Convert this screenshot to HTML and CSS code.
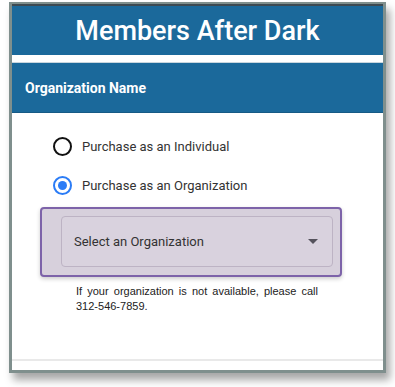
FILE: index.html
```html
<!DOCTYPE html>
<html>
<head>
<meta charset="utf-8">
<link rel="stylesheet" href="styles.css">
</head>
<body>
<div class="frame">
  <div class="header"><h1 class="title">Members After Dark</h1></div>
  <div class="gap"></div>
  <div class="section-bar">Organization Name</div>
  <div class="content">
    <label class="radio-row">
      <span class="radio"></span>
      <span class="radio-label">Purchase as an Individual</span>
    </label>
    <label class="radio-row">
      <span class="radio checked"><span class="dot"></span></span>
      <span class="radio-label">Purchase as an Organization</span>
    </label>
    <div class="highlight">
      <div class="select">
        <span class="select-text">Select an Organization</span>
        <svg class="caret" width="10" height="5" viewBox="0 0 10 5"><path d="M0 0 L10 0 L5 5 Z" fill="#55525c"/></svg>
      </div>
    </div>
    <p class="help">If your organization is not available, please call 312-546-7859.</p>
  </div>
  <div class="footer"></div>
</div>
</body>
</html>
```

FILE: styles.css
```css
html, body {
  margin: 0;
  padding: 0;
  background: #ffffff;
}
body {
  width: 395px;
  height: 387px;
  overflow: hidden;
  font-family: Roboto, "Liberation Sans", sans-serif;
}
.frame {
  margin: 2px 0 0 9px;
  width: 371px;
  border: 3px solid #7f8f8d;
  border-top-width: 2px;
  box-shadow: 4px 7px 8px rgba(0, 0, 0, 0.35);
  background: #ffffff;
}
.header {
  background: #1b699b;
  border-top: 2px solid #3d4a52;
  height: 49px;
  display: flex;
  align-items: center;
  justify-content: center;
}
.title {
  margin: 0;
  color: #ffffff;
  font-weight: 500;
  font-size: 27px;
}
.gap {
  height: 7px;
  background: #ffffff;
  border-bottom: 1px solid #c9d6de;
}
.section-bar {
  background: #1b699b;
  height: 49px;
  display: flex;
  align-items: center;
  padding-left: 13px;
  color: #ffffff;
  font-weight: 700;
  font-size: 14px;
  border-bottom: 1px solid #175a85;
}
.content {
  padding: 22px 0 0 28px;
  height: 224px;
}
.radio-row {
  display: flex;
  align-items: center;
  height: 22px;
  margin-bottom: 17px;
}
.radio {
  width: 15px;
  height: 15px;
  border: 2px solid #111111;
  border-radius: 50%;
  margin-left: 13px;
  margin-right: 10px;
  display: flex;
  align-items: center;
  justify-content: center;
}
.radio.checked {
  border-color: #2b7cf6;
}
.dot {
  width: 9px;
  height: 9px;
  border-radius: 50%;
  background: #2b7cf6;
}
.radio-label {
  font-size: 13px;
  color: #333333;
}
.highlight {
  margin-top: -6px;
  width: 302px;
  height: 70px;
  box-sizing: border-box;
  border: 2px solid #7d63a9;
  border-radius: 4px;
  background: #d7d0dc;
  box-shadow: 0 2px 4px rgba(0, 0, 0, 0.2);
  padding: 7px 0 0 19px;
}
.select {
  width: 272px;
  height: 51px;
  box-sizing: border-box;
  border: 1px solid #bdb3c4;
  border-radius: 4px;
  background: #d9d2de;
  display: flex;
  align-items: center;
  justify-content: space-between;
  padding: 0 14px 0 12px;
}
.select-text {
  font-size: 13px;
  color: #333333;
}
.caret {
  display: block;
}
.help {
  margin: 7px 0 0 36px;
  width: 242px;
  font-family: "Liberation Sans", Arial, sans-serif;
  font-size: 11px;
  line-height: 15px;
  color: #222222;
  text-align: justify;
}
.footer {
  height: 9px;
  border-top: 2px solid #e9e9e9;
}
```
